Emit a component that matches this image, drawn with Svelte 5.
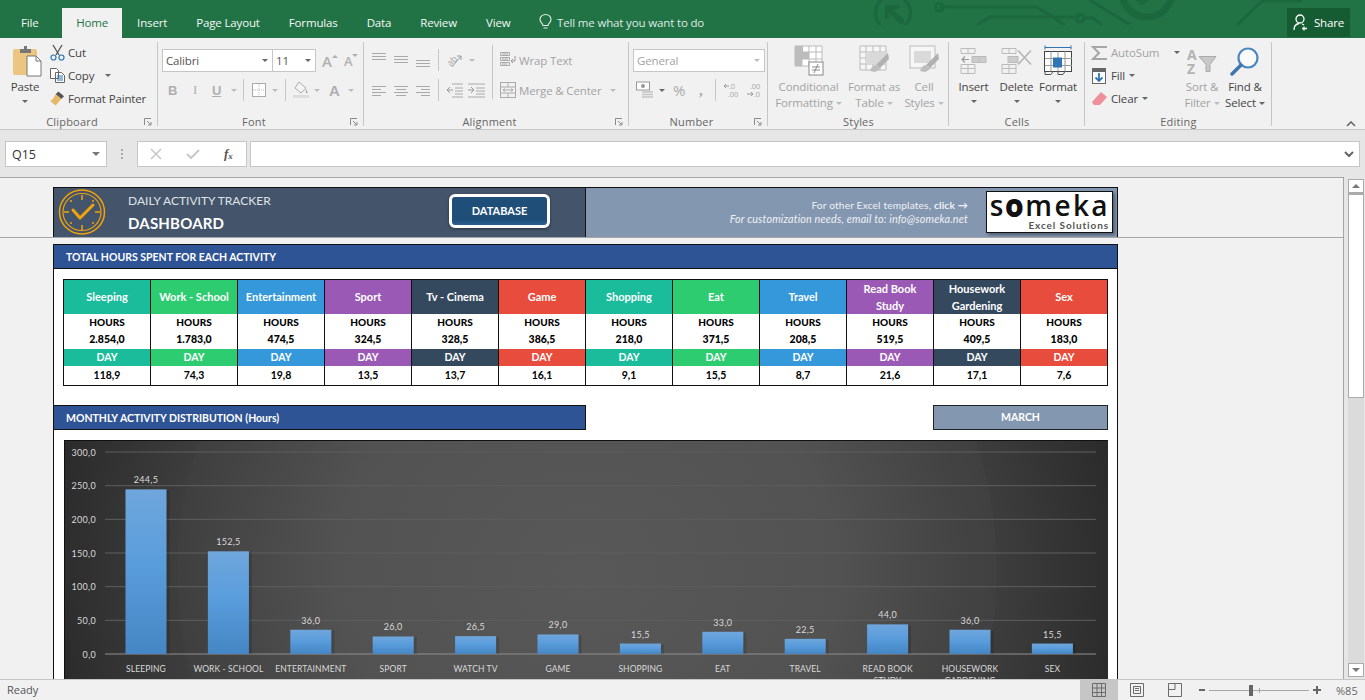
<script>
  const tabs = ["Insert", "Page Layout", "Formulas", "Data", "Review", "View"];

  const activities = [
    { name: "Sleeping", hours: "2.854,0", day: "118,9", color: "#1abc9c" },
    { name: "Work - School", hours: "1.783,0", day: "74,3", color: "#2ecc71" },
    { name: "Entertainment", hours: "474,5", day: "19,8", color: "#3498db" },
    { name: "Sport", hours: "324,5", day: "13,5", color: "#9b59b6" },
    { name: "Tv - Cinema", hours: "328,5", day: "13,7", color: "#34495e" },
    { name: "Game", hours: "386,5", day: "16,1", color: "#e74c3c" },
    { name: "Shopping", hours: "218,0", day: "9,1", color: "#1abc9c" },
    { name: "Eat", hours: "371,5", day: "15,5", color: "#2ecc71" },
    { name: "Travel", hours: "208,5", day: "8,7", color: "#3498db" },
    { name: "Read Book Study", hours: "519,5", day: "21,6", color: "#9b59b6" },
    { name: "Housework Gardening", hours: "409,5", day: "17,1", color: "#34495e" },
    { name: "Sex", hours: "183,0", day: "7,6", color: "#e74c3c" }
  ];

  const monthly = [
    { label: ["SLEEPING"], value: 244.5 },
    { label: ["WORK - SCHOOL"], value: 152.5 },
    { label: ["ENTERTAINMENT"], value: 36 },
    { label: ["SPORT"], value: 26 },
    { label: ["WATCH TV"], value: 26.5 },
    { label: ["GAME"], value: 29 },
    { label: ["SHOPPING"], value: 15.5 },
    { label: ["EAT"], value: 33 },
    { label: ["TRAVEL"], value: 22.5 },
    { label: ["READ BOOK", "STUDY"], value: 44 },
    { label: ["HOUSEWORK", "GARDENING"], value: 36 },
    { label: ["SEX"], value: 15.5 }
  ];

  // chart geometry, relative to the chart box
  const baseY = 213;
  const unit = 202 / 300;
  const plotLeft = 40;
  const plotRight = 1031;
  const step = 82.4;
  const ticks = [0, 50, 100, 150, 200, 250, 300];
  const fmt = (v) => v.toFixed(1).replace(".", ",");
</script>

{#snippet lines(rows)}
  <svg class="ic" width="15" height="20" viewBox="0 0 15 20">
    {#each rows as r}
      <rect x={r[0]} y={r[1]} width={r[2]} height="1" fill="#a9a9a9" />
    {/each}
  </svg>
{/snippet}

{#snippet launcher()}
  <svg class="launch" width="8" height="8" viewBox="0 0 8 8">
    <path d="M.5 7V.5H7" fill="none" stroke="#8a8a8a" />
    <path d="M3 3l3.5 3.5M7 4v3H4" fill="none" stroke="#8a8a8a" />
  </svg>
{/snippet}

<div class="app">
  <header class="tabbar">
    <svg class="art" width="500" height="25" viewBox="860 0 500 25">
      <g fill="none" stroke="#1c683e" stroke-width="3">
        <circle cx="893" cy="13" r="17.5" stroke-width="3.5" />
        <path d="M939 7h98l28 18M977 25l13-8h90M1084 18h9l9 7M1090 0l40 25M1237 25l25-24h40" />
        <circle cx="939.500" cy="7" r="4" />
        <circle cx="1080" cy="18" r="4" />
        <circle cx="1147" cy="-8" r="25" stroke-width="7" />
        <path d="M1136 -2l6 5 10-8" stroke-width="4" />
      </g>
      <path d="M885 5h14v4h-6l12 12-4 4-12-12v6h-4z" fill="#1c683e" />
    </svg>
    <span class="tab file">File</span>
    <span class="tab home">Home</span>
    {#each tabs as t}
      <span class="tab">{t}</span>
    {/each}
    <div class="tell">
      <svg class="ic" width="13" height="16" viewBox="0 0 13 16">
        <path d="M4 11.500C3.500 9 1 8.500 1 5.500a5.500 5 0 0 1 11 0c0 3-2.500 3.500-3 6zM4.500 14h4" fill="none" stroke="#e4efe8" stroke-width="1.100" />
      </svg>
      <span>Tell me what you want to do</span>
    </div>
    <div class="share">
      <svg class="ic" width="16" height="17" viewBox="0 0 16 17">
        <circle cx="7" cy="5" r="4" fill="none" stroke="#fff" stroke-width="1.300" />
        <path d="M1 16c0-4 2-6 5-6.500M9 10c1 .3 1.500.6 2 1M11 12.500v4M9 14.500h5" fill="none" stroke="#fff" stroke-width="1.300" />
      </svg>
      <span>Share</span>
    </div>
  </header>

  <section class="ribbon">
    <!-- Clipboard -->
    <div class="group" style="width:158px">
      <div class="body">
        <div class="big paste">
          <svg class="bigic" width="30" height="32" viewBox="0 0 30 32">
            <rect x="1" y="4" width="24" height="26" rx="2" fill="#ecc680" />
            <path d="M8 4h4V1h3v3h4v4H8z" fill="#777" />
            <path d="M15 11h9l5 5v15H15z" fill="#fff" stroke="#777" />
            <path d="M24 11v5h5" fill="none" stroke="#777" />
          </svg>
          <span class="dark">Paste</span>
          <i class="caret"></i>
        </div>
        <div class="stack">
          <div class="row">
            <svg class="ic" width="15" height="16" viewBox="0 0 15 16">
              <path d="M3 0l6 10M12 0L6 10" stroke="#555" stroke-width="1.300" />
              <circle cx="3.500" cy="12.500" r="2.500" fill="none" stroke="#2f75b5" stroke-width="1.200" />
              <circle cx="11.500" cy="12.500" r="2.500" fill="none" stroke="#2f75b5" stroke-width="1.200" />
            </svg>
            <span>Cut</span>
          </div>
          <div class="row">
            <svg class="ic" width="15" height="15" viewBox="0 0 15 15">
              <path d="M.5.5h6l2 2v8H.5zM5.500 4.500h6l3 3v7h-9z" fill="#fff" stroke="#666" />
              <path d="M7 8h6M7 10h6M7 12h6" stroke="#2f75b5" />
            </svg>
            <span>Copy</span>
            <i class="caret copycaret"></i>
          </div>
          <div class="row">
            <svg class="ic" width="16" height="15" viewBox="0 0 16 15">
              <path d="M9 0l6 5-3 3-6-5z" fill="#555" />
              <path d="M6 3l6 5-6 7-6-5c2 0 4-3 6-7z" fill="#e8b766" />
            </svg>
            <span>Format Painter</span>
          </div>
        </div>
      </div>
      <div class="label launched">Clipboard{@render launcher()}</div>
    </div>

    <!-- Font -->
    <div class="group" style="width:206px">
      <div class="body col fontcol">
        <div class="combos">
          <div class="combo" style="width:111px"><span>Calibri</span><i class="caret"></i></div>
          <div class="combo" style="width:44px"><span>11</span><i class="caret"></i></div>
          <span class="grow">A<i class="tri up"></i></span>
          <span class="shrink">A<i class="tri"></i></span>
        </div>
        <div class="tools fonttools">
          <b class="g" style="width:15px">B</b>
          <em class="g" style="width:29px">I</em>
          <u class="g" style="width:14px">U</u>
          <i class="caret soft" style="margin-left:5px"></i>
          <span class="vsep" style="margin:0 8px 0 6px"></span>
          <svg class="ic" width="14" height="14" viewBox="0 0 14 14">
            <rect x=".5" y=".5" width="13" height="13" fill="#fff" stroke="#aaa" />
            <path d="M7 1v12M1 7h12" stroke="#bbb" stroke-dasharray="1 1" />
          </svg>
          <i class="caret soft" style="margin-left:6px"></i>
          <span class="vsep" style="margin:0 7px"></span>
          <svg class="ic" width="16" height="18" viewBox="0 0 16 18">
            <path d="M6 1l7 6-5 5-6-5z" fill="#f4f4f4" stroke="#aaa" />
            <path d="M13 8c1 2 2 3 1.500 4s-2.500 0-1.500-4z" fill="#aaa" />
            <rect x="0" y="14" width="16" height="3" fill="#ddd" />
          </svg>
          <i class="caret soft" style="margin-left:5px"></i>
          <b class="g biga">A</b>
          <i class="caret soft" style="margin-left:8px"></i>
        </div>
      </div>
      <div class="label launched">Font{@render launcher()}</div>
    </div>

    <!-- Alignment -->
    <div class="group" style="width:265px">
      <div class="body alignbody">
        <div class="col aligncol">
          <div class="tools">
            <span class="aligns">
              {@render lines([[0,3,14],[0,6,14],[0,9,14]])}
              {@render lines([[0,6,14],[0,9,14],[0,12,14]])}
              {@render lines([[0,10,14],[0,13,14],[0,16,14]])}
            </span>
            <span class="vsep" style="margin:0 7px"></span>
            <svg class="ic" width="17" height="18" viewBox="0 0 17 18">
              <text x="1" y="13" transform="rotate(-45 6 10)" font-size="9" font-family="Open Sans, sans-serif" fill="#aaa">ab</text>
              <path d="M6 16L15 5M11 5h4v4" fill="none" stroke="#999" />
            </svg>
            <i class="caret soft" style="margin-left:6px"></i>
          </div>
          <div class="tools">
            <span class="aligns">
              {@render lines([[0,6,14],[0,9,9],[0,12,14],[0,15,9]])}
              {@render lines([[0,6,14],[2,9,10],[0,12,14],[2,15,10]])}
              {@render lines([[0,6,14],[5,9,9],[0,12,14],[5,15,9]])}
            </span>
            <span class="vsep" style="margin:0 7px"></span>
            <svg class="ic" width="17" height="18" viewBox="0 0 17 18">
              <path d="M6 3h11M9 7h8M9 10h8M9 13h8M6 16h11" stroke="#aaa" />
              <path d="M7 9H1M4 6L1 9l3 3" fill="none" stroke="#999" />
            </svg>
            <svg class="ic" style="margin-left:5px" width="17" height="18" viewBox="0 0 17 18">
              <path d="M0 3h17M0 16h17M8 7h9M8 10h9M8 13h9" stroke="#aaa" />
              <path d="M0 9h6M3 6l3 3-3 3" fill="none" stroke="#999" />
            </svg>
          </div>
        </div>
        <span class="vsep tall"></span>
        <div class="col">
          <div class="tools muted">
            <svg class="ic" width="16" height="16" viewBox="0 0 16 16">
              <path d="M.5.500h9v3h-9zM.5 5.500h9v3h-9zM.5 10.500h9v3h-9zM2 2h6M2 7h6M2 12h5" fill="none" stroke="#aaa" />
              <path d="M15 4v5h-4M13 7l-2 2 2 2" fill="none" stroke="#999" />
            </svg>
            <span class="lab">Wrap Text</span>
          </div>
          <div class="tools muted">
            <svg class="ic" width="16" height="16" viewBox="0 0 16 16">
              <rect x=".5" y=".5" width="15" height="15" fill="none" stroke="#aaa" />
              <path d="M1 5h14M1 11h14M8 1v4M8 11v4M3 8h10M5 6.500L3 8l2 1.500M11 6.500L13 8l-2 1.500" fill="none" stroke="#aaa" />
            </svg>
            <span class="lab">Merge &amp; Center</span>
            <i class="caret soft" style="margin-left:9px"></i>
          </div>
        </div>
      </div>
      <div class="label launched">Alignment{@render launcher()}</div>
    </div>

    <!-- Number -->
    <div class="group" style="width:139px">
      <div class="body col numcol">
        <div class="combo general"><span>General</span><i class="caret soft"></i></div>
        <div class="tools numtools">
          <svg class="ic" width="17" height="18" viewBox="0 0 17 18">
            <rect x=".5" y="1" width="13" height="8" fill="#fff" stroke="#999" />
            <circle cx="7" cy="5" r="2" fill="#999" />
            <path d="M6 11h11M6 13.500h11M6 16h11" stroke="#c4c4c4" stroke-width="1.500" />
          </svg>
          <i class="caret" style="margin-left:6px"></i>
          <span class="pct">%</span>
          <b class="comma">,</b>
          <span class="vsep" style="margin:0 8px 0 12px"></span>
          <svg class="ic" width="15" height="16" viewBox="0 0 15 16">
            <text x="5" y="6.500" font-size="7.500" font-family="Open Sans, sans-serif" fill="#aaa">.0</text>
            <text x="4" y="15" font-size="7.500" font-family="Open Sans, sans-serif" fill="#aaa">.00</text>
            <path d="M5 4H0M2 2L0 4l2 2" fill="none" stroke="#999" />
          </svg>
          <svg class="ic" style="margin-left:7px" width="15" height="16" viewBox="0 0 15 16">
            <text x="4" y="6.500" font-size="7.500" font-family="Open Sans, sans-serif" fill="#aaa">.00</text>
            <text x="8" y="15" font-size="7.500" font-family="Open Sans, sans-serif" fill="#aaa">.0</text>
            <path d="M1 12h6M5 10l2 2-2 2" fill="none" stroke="#999" />
          </svg>
        </div>
      </div>
      <div class="label launched">Number{@render launcher()}</div>
    </div>

    <!-- Styles -->
    <div class="group" style="width:181px">
      <div class="body" style="padding-left:2px">
        <div class="big muted" style="width:77px">
          <svg class="bigic" width="30" height="32" viewBox="0 0 30 32">
            <path d="M1 1h27v20H1zM1 7h27M1 14h27M8 1v20M15 1v20M22 1v20" fill="#fff" stroke="#bbb" />
            <path d="M1 1h8v6h6v7h-7v7H1z" fill="#bcbcbc" />
            <rect x="15" y="17" width="14" height="13" fill="#fff" stroke="#888" />
            <path d="M18 22h8M18 25h8M24 19l-4 9" stroke="#888" />
          </svg>
          <span class="lh">Conditional</span>
          <span class="lh">Formatting<i class="caret soft inl"></i></span>
        </div>
        <div class="big muted" style="width:54px">
          <svg class="bigic" width="30" height="32" viewBox="0 0 30 32">
            <path d="M1 1h26v24H1zM1 7h26M1 13h26M1 19h26M7 1v24M14 1v24M21 1v24" fill="#f6f6f6" stroke="#bbb" />
            <path d="M7 7h20v12H7z" fill="#d9d9d9" />
            <path d="M29 8L17 20l4 3L30 14z" fill="#b0b0b0" />
            <path d="M17 20c-3 0-5 3-6 6l5 1c3-1 5-3 5-4z" fill="#bdbdbd" />
          </svg>
          <span class="lh">Format as</span>
          <span class="lh">Table<i class="caret soft inl"></i></span>
        </div>
        <div class="big muted" style="width:46px">
          <svg class="bigic" width="30" height="32" viewBox="0 0 30 32">
            <rect x="1" y="1" width="25" height="22" fill="#f6f6f6" stroke="#bbb" />
            <rect x="5" y="6" width="17" height="12" fill="#d9d9d9" />
            <path d="M29 8L17 20l4 3L30 14z" fill="#b0b0b0" />
            <path d="M17 20c-3 0-5 3-6 6l5 1c3-1 5-3 5-4z" fill="#bdbdbd" />
          </svg>
          <span class="lh">Cell</span>
          <span class="lh">Styles<i class="caret soft inl"></i></span>
        </div>
      </div>
      <div class="label">Styles</div>
    </div>

    <!-- Cells -->
    <div class="group" style="width:136px">
      <div class="body">
        <div class="big" style="width:49px">
          <svg class="bigic" width="27" height="27" viewBox="0 0 27 27">
            <path d="M1 1h14v5H1zM8 1v5M1 17h14v9H1zM1 21h14M8 17v9" fill="none" stroke="#bbb" />
            <path d="M12 9h14v6H12zM19 9v6" fill="#ccc" stroke="#bbb" />
            <path d="M9 12H2M5 9l-3 3 3 3" fill="none" stroke="#999" stroke-width="1.200" />
          </svg>
          <span class="lh dark">Insert</span>
          <i class="caret"></i>
        </div>
        <div class="big" style="width:37px">
          <svg class="bigic" width="31" height="27" viewBox="0 0 31 27">
            <path d="M1 1h14v5H1zM8 1v5M1 17h14v9H1zM1 21h14M8 17v9" fill="none" stroke="#bbb" />
            <rect x="7" y="9" width="10" height="6" fill="#ccc" stroke="#bbb" />
            <path d="M17 3l13 14M30 3L17 17" stroke="#b3b3b3" stroke-width="1.500" />
          </svg>
          <span class="lh dark">Delete</span>
          <i class="caret"></i>
        </div>
        <div class="big" style="width:46px">
          <svg class="bigic" width="29" height="31" viewBox="0 0 29 31">
            <path d="M1 2h26M1 0v4M27 0v4" stroke="#2f75b5" fill="none" />
            <rect x=".5" y="6" width="27" height="20" fill="#fff" stroke="#444" />
            <path d="M1 13h27M1 20h27M7 6v20M14 6v20M21 6v20" stroke="#999" />
            <rect x="9" y="12" width="9" height="10" fill="#2f75b5" />
            <path d="M1 26v3h6l2-3M14 26v3h5l2-3" fill="none" stroke="#555" />
          </svg>
          <span class="lh dark">Format</span>
          <i class="caret"></i>
        </div>
      </div>
      <div class="label">Cells</div>
    </div>

    <!-- Editing -->
    <div class="group" style="width:187px">
      <div class="body">
        <div class="stack edit">
          <div class="row muted">
            <svg class="ic" width="15" height="14" viewBox="0 0 15 14">
              <path d="M15 1H1l6 6-6 6h14" fill="none" stroke="#a6a6a6" stroke-width="2" />
            </svg>
            <span>AutoSum</span>
            <i class="caret" style="margin-left:11px"></i>
          </div>
          <div class="row">
            <svg class="ic" width="15" height="16" viewBox="0 0 15 16">
              <rect x=".5" y=".5" width="13" height="15" fill="#fff" stroke="#666" />
              <rect x="0" y="0" width="14" height="4" fill="#666" />
              <path d="M7 5v8M3.500 9.500L7 13l3.500-3.500" fill="none" stroke="#2f75b5" stroke-width="1.800" />
            </svg>
            <span>Fill</span>
            <i class="caret inl2"></i>
          </div>
          <div class="row">
            <svg class="ic" width="15" height="14" viewBox="0 0 15 14">
              <path d="M9 0l6 5-7 8-6 0-2-3z" fill="#ee8f9a" />
            </svg>
            <span>Clear</span>
            <i class="caret inl2"></i>
          </div>
        </div>
        <div class="big muted" style="width:40px">
          <svg class="bigic" width="30" height="27" viewBox="0 0 30 27">
            <text x="0" y="12" font-size="14" font-weight="700" font-family="Open Sans, sans-serif" fill="#b3b3b3">A</text>
            <text x="0" y="26" font-size="14" font-weight="700" font-family="Open Sans, sans-serif" fill="#b3b3b3">Z</text>
            <path d="M12 9h17l-6 8v7l-4 0v-7z" fill="#c8c8c8" stroke="#aaa" />
          </svg>
          <span class="lh">Sort &amp;</span>
          <span class="lh">Filter<i class="caret soft inl"></i></span>
        </div>
        <div class="big" style="width:46px">
          <svg class="bigic" width="30" height="28" viewBox="0 0 30 28">
            <circle cx="18" cy="11" r="9.500" fill="#fafafa" stroke="#4a86c0" stroke-width="2.200" />
            <path d="M11 18L2 27" stroke="#3f77ad" stroke-width="3.500" stroke-linecap="round" />
          </svg>
          <span class="lh dark">Find &amp;</span>
          <span class="lh dark">Select<i class="caret inl"></i></span>
        </div>
      </div>
      <div class="label">Editing</div>
    </div>

    <svg class="collapse" width="10" height="6" viewBox="0 0 10 6">
      <path d="M1 5l4-4 4 4" fill="none" stroke="#666" stroke-width="1.600" />
    </svg>
  </section>

  <section class="formula">
    <div class="namebox"><span>Q15</span><i class="caret big-caret"></i></div>
    <div class="dots"><i></i><i></i><i></i></div>
    <div class="fxbox">
      <svg class="ic" width="12" height="12" viewBox="0 0 12 12">
        <path d="M1 1l10 10M11 1L1 11" stroke="#c9c9c9" stroke-width="1.600" />
      </svg>
      <svg class="ic" width="14" height="12" viewBox="0 0 14 12">
        <path d="M1 6l4 4 8-8" fill="none" stroke="#c9c9c9" stroke-width="2" />
      </svg>
      <span class="fx">f<sub>x</sub></span>
    </div>
    <div class="input">
      <svg class="ic" width="10" height="7" viewBox="0 0 10 7">
        <path d="M1 1l4 4 4-4" fill="none" stroke="#666" stroke-width="2" />
      </svg>
    </div>
  </section>

  <main class="workspace">
    <div class="sheet">
      <div class="frozen">
        <div class="head">
          <div class="head-left">
            <svg class="clock" width="48" height="46" viewBox="0 0 48 46">
              <g fill="none" stroke="#f0a30a">
                <ellipse cx="24" cy="23" rx="22.500" ry="22" stroke-width="1.500" />
                <ellipse cx="24" cy="23" rx="19" ry="18.500" stroke-width="1.200" />
                <path d="M24 6v5M24 36v5M6 23h5M37 23h5" stroke-width="1.500" />
                <path d="M15 21l7 8 13-13" stroke-width="3" stroke-linecap="round" stroke-linejoin="round" />
              </g>
              <circle cx="13" cy="12" r="1" fill="#f0a30a" /><circle cx="35" cy="12" r="1" fill="#f0a30a" />
              <circle cx="13" cy="34" r="1" fill="#f0a30a" /><circle cx="35" cy="34" r="1" fill="#f0a30a" />
            </svg>
            <div class="titles">
              <span class="t1">DAILY ACTIVITY TRACKER</span>
              <span class="t2">DASHBOARD</span>
            </div>
            <div class="db">DATABASE</div>
          </div>
          <div class="head-right">
            <div class="notes">
              <span>For other Excel templates, <b>click →</b></span>
              <em>For customization needs, email to: info@someka.net</em>
            </div>
            <div class="logo">
              <span class="brand">s<span class="o">o</span>meka</span>
              <span class="sub">Excel Solutions</span>
            </div>
          </div>
        </div>
      </div>

      <div class="panel">
        <div class="bar wide">TOTAL HOURS SPENT FOR EACH ACTIVITY</div>
        <div class="table">
          {#each activities as a}
            <div class="col-a">
              <div class="name" style="background:{a.color}"><span>{a.name}</span></div>
              <div class="hours"><b>HOURS</b><b>{a.hours}</b></div>
              <div class="dayhead" style="background:{a.color}">DAY</div>
              <div class="dayval">{a.day}</div>
            </div>
          {/each}
        </div>

        <div class="monthrow">
          <div class="bar half">MONTHLY ACTIVITY DISTRIBUTION (Hours)</div>
          <div class="month">MARCH</div>
        </div>

        <div class="chart">
          <svg width="1043" height="262" viewBox="0 0 1043 262">
            <defs>
              <linearGradient id="barfill" x1="0" y1="0" x2="0" y2="1">
                <stop offset="0" stop-color="#6fa6dc" />
                <stop offset=".45" stop-color="#5a9ddc" />
                <stop offset="1" stop-color="#4586c4" />
              </linearGradient>
            </defs>
            <g fill="#fff" opacity=".012">
              <circle cx="522" cy="130" r="410" />
              <circle cx="522" cy="130" r="300" />
              <circle cx="522" cy="130" r="225" />
              <circle cx="522" cy="130" r="165" />
            </g>
            {#each ticks as t}
              <line x1={plotLeft} x2={plotRight} y1={baseY - t * unit} y2={baseY - t * unit}
                stroke={t === 0 ? "#8f8f8f" : "#5e5e5e"} />
              <text class="axis" x="31" y={baseY - t * unit + 3.500}>{fmt(t)}</text>
            {/each}
            {#each monthly as m, i}
              {@const x = plotLeft + step * i + 20.500}
              {@const h = m.value * unit}
              <rect x={x + 41} y={baseY - h + 1} width="3" height={h - 1} fill="#000" opacity=".14" />
              <rect x={x} y={baseY - h} width="41" height={h} fill="url(#barfill)" />
              <text class="val" x={x + 20.500} y={baseY - h - 6}>{fmt(m.value)}</text>
              {#each m.label as l, j}
                <text class="cat" x={x + 20.500} y={231 + j * 12}>{l}</text>
              {/each}
            {/each}
          </svg>
        </div>
      </div>
    </div>

    <aside class="scroll">
      <div class="sbtn"><i class="tri up dark-tri"></i></div>
      <div class="thumb"></div>
      <div class="track"></div>
      <div class="sbtn"><i class="tri dark-tri"></i></div>
    </aside>
  </main>

  <footer class="status">
    <span class="ready">Ready</span>
    <div class="views">
      <div class="view on">
        <svg class="ic" width="14" height="14" viewBox="0 0 14 14">
          <path d="M.5.500h13v13H.5zM.5 5h13M.5 9.500h13M5 .5v13M9.500.5v13" fill="none" stroke="#6b6b6b" />
        </svg>
      </div>
      <div class="view">
        <svg class="ic" width="14" height="14" viewBox="0 0 14 14">
          <path d="M.5.500h13v13H.5zM3.500 3.500h7v7h-7zM5 5.500h4M5 7.500h4" fill="none" stroke="#6b6b6b" />
        </svg>
      </div>
      <div class="view">
        <svg class="ic" width="14" height="14" viewBox="0 0 14 14">
          <path d="M.5.500h13v13H.5zM.5 6.500h6.500V.5M7 .5" fill="none" stroke="#6b6b6b" />
        </svg>
      </div>
    </div>
    <div class="zoom">
      <i class="minus"></i>
      <div class="slider"><i class="mark"></i><i class="knob"></i></div>
      <i class="plus"></i>
      <span class="pctz">%85</span>
    </div>
  </footer>
</div>

<style>
  :global(body) {
    margin: 0;
    overflow: hidden;
    background: #f1f1f1;
  }

  .app {
    width: 1365px;
    height: 700px;
    display: flex;
    flex-direction: column;
    overflow: hidden;
    font-family: "Open Sans", "Noto Sans", sans-serif;
    font-size: 11.500px;
    color: #444;
  }

  i, em, b { font-style: normal; }
  .ic { display: block; flex: none; overflow: visible; }

  /* title tabs */
  .tabbar {
    height: 38px;
    flex: none;
    background: #217346;
    display: flex;
    align-items: flex-end;
    padding-left: 6.500px;
    box-sizing: border-box;
    position: relative;
    color: #f4f8f5;
    letter-spacing: -.15px;
  }
  .art { position: absolute; left: 860px; top: 0; }
  .tab {
    position: relative;
    height: 30px;
    line-height: 29px;
    padding: 0 14.500px;
  }
  .tab.file { margin-right: 9px; }
  .tab.home {
    background: #f1f1f1;
    color: #217346;
    width: 60px;
    padding: 0;
    text-align: center;
    margin-right: 0.500px;
  }
  .tell {
    position: relative;
    display: flex;
    align-items: center;
    gap: 5px;
    height: 30px;
    padding-bottom: 1px;
    margin-left: 14px;
    color: #dfeae3;
  }
  .share {
    position: absolute;
    left: 1287px;
    top: 8px;
    width: 63px;
    height: 29px;
    background: #165c33;
    display: flex;
    align-items: center;
    justify-content: center;
    gap: 5px;
    color: #fff;
  }

  /* ribbon */
  .ribbon {
    height: 92px;
    flex: none;
    display: flex;
    position: relative;
    box-sizing: border-box;
    background: #f1f1f1;
    border-bottom: 1px solid #c6c6c6;
    letter-spacing: -.15px;
  }
  .group {
    position: relative;
    flex: none;
    height: 91px;
    padding-top: 4px;
    box-sizing: border-box;
    display: flex;
    flex-direction: column;
  }
  .group::after {
    content: "";
    position: absolute;
    right: 0;
    top: 4px;
    bottom: 3px;
    width: 1px;
    background: #c6c6c6;
  }
  .body { display: flex; flex: 1; min-height: 0; }
  .col { display: flex; flex-direction: column; }
  .label {
    height: 15px;
    line-height: 15px;
    flex: none;
    text-align: center;
    color: #666;
    font-size: 11px;
    letter-spacing: 0.200px;
    position: relative;
  }
  .label.launched { padding-right: 14px; }
  .launch { position: absolute; right: 6px; top: 4px; }

  .big {
    display: flex;
    flex-direction: column;
    align-items: center;
    flex: none;
    color: #444;
  }
  .bigic { height: 32px; margin-top: 3px; margin-bottom: 2px; display: block; }
  .lh { line-height: 16px; white-space: nowrap; }
  .big .caret { margin-top: 5px; }
  .paste { width: 50px; }
  .paste > span { line-height: 16px; }
  .paste .bigic { margin-left: 4px; }
  .dark { color: #444; }
  .muted, .muted .lh { color: #a3a3a3; }

  .stack { display: flex; flex-direction: column; margin-top: -1px; }
  .row { display: flex; align-items: center; height: 23px; gap: 3px; white-space: nowrap; color: #444; }
  .row .ic { width: 15px; }
  .row.muted { color: #a3a3a3; }
  .edit { width: 90px; padding-left: 7px; flex: none; }
  .edit .row { gap: 4px; }
  .copycaret { margin-left: 8px; }
  .inl2 { margin-left: 0; }

  .caret {
    display: inline-block;
    width: 0;
    height: 0;
    border: 3.500px solid transparent;
    border-top: 3.500px solid #666;
    border-bottom: 0;
    flex: none;
  }
  .caret.soft { border-top-color: #bdbdbd; }
  .caret.inl { margin-left: 3px; vertical-align: 2px; margin-top: 0; }

  .fontcol { padding: 7px 0 0 4px; }
  .combos { display: flex; align-items: center; height: 23px; }
  .combo {
    height: 23px;
    box-sizing: border-box;
    background: #fff;
    border: 1px solid #c6c6c6;
    display: flex;
    align-items: center;
    justify-content: space-between;
    padding: 0 4px 0 3px;
    margin-right: -1px;
    color: #555;
  }
  .grow, .shrink { position: relative; color: #b0b0b0; font-weight: 600; display: block; }
  .grow { font-size: 15px; margin-left: 7px; width: 22px; }
  .shrink { font-size: 13px; margin-left: 0; width: 20px; }
  .tri {
    display: inline-block;
    width: 0;
    height: 0;
    border: 3px solid transparent;
    border-top: 3px solid #b0b0b0;
    border-bottom: 0;
    vertical-align: 9px;
    margin-left: 0;
  }
  .tri.up { border-top: 0; border-bottom: 3px solid #b0b0b0; }

  .tools { display: flex; align-items: center; height: 20px; white-space: nowrap; }
  .fonttools { margin-top: 8px; padding-left: 6px; }
  .g { color: #b0b0b0; font-family: "Liberation Sans", sans-serif; font-size: 13px; display: block; flex: none; }
  em.g { padding-left: 10px; font-family: "Liberation Serif", serif; box-sizing: border-box; }
  u.g { font-weight: 700; }
  .biga { font-size: 15px; margin-left: 9px; }
  .vsep { display: block; width: 1px; height: 22px; background: #c6c6c6; flex: none; }
  .vsep.tall { height: 54px; margin: 3px 7px 0 8px; }

  .alignbody { padding-left: 8px; }
  .aligncol { padding-top: 8px; gap: 10px; width: 112px; flex: none; }
  .aligns { display: flex; gap: 7px; }
  .alignbody > .col:last-child { padding-top: 8px; gap: 10px; }
  .lab { margin-left: 3px; color: #a3a3a3; }

  .numcol { padding: 7px 0 0 4px; }
  .general { width: 132px; color: #a3a3a3; margin-bottom: 8px; }
  .numtools { padding-left: 3px; }
  .pct { font-size: 15px; color: #aaa; margin-left: 8px; width: 15px; }
  .comma { color: #aaa; font-size: 15px; margin-left: 11px; line-height: 12px; font-family: "Liberation Serif", serif; }

  .collapse { position: absolute; left: 1346px; top: 83px; }

  /* formula row */
  .formula {
    height: 47px;
    flex: none;
    background: #e6e6e6;
    display: flex;
    align-items: flex-start;
    padding: 11px 5px 0;
    box-sizing: border-box;
  }
  .namebox, .fxbox, .input {
    height: 26px;
    box-sizing: border-box;
    background: #fff;
    border: 1px solid #c6c6c6;
    display: flex;
    align-items: center;
  }
  .namebox {
    width: 102px;
    padding: 0 6px;
    justify-content: space-between;
    font-size: 12.500px;
    color: #333;
  }
  .big-caret { border-width: 4px; border-top-width: 4px; border-top-color: #777; }
  .dots { width: 30px; display: flex; flex-direction: column; align-items: center; gap: 2px; padding-top: 8px; }
  .dots i { width: 2px; height: 2px; background: #aaa; }
  .fxbox { width: 110px; padding-left: 12px; gap: 24px; }
  .fx { font-family: "Liberation Serif", serif; font-style: italic; font-weight: 700; font-size: 13px; color: #555; }
  .fx sub { font-size: 9px; vertical-align: -1px; }
  .input { margin-left: 3px; width: 1110px; justify-content: flex-end; padding-right: 5px; }

  /* sheet */
  .workspace { display: flex; height: 502px; flex: none; background: #e6e6e6; overflow: hidden; }
  .sheet {
    width: 1344px;
    height: 502px;
    box-sizing: border-box;
    flex: none;
    background: #f1f1f1;
    border-top: 1px solid #a6a6a6;
    border-right: 1px solid #a6a6a6;
    overflow: hidden;
  }
  .frozen {
    height: 60px;
    box-sizing: border-box;
    padding: 9px 0 0 53px;
    border-bottom: 1px solid #a6a6a6;
    overflow: hidden;
  }
  .head {
    width: 1065px;
    height: 60px;
    box-sizing: border-box;
    display: flex;
    border: 1px solid #111;
    background: #8497b0;
    color: #fff;
    font-family: Lato, sans-serif;
  }
  .head-left {
    width: 532px;
    flex: none;
    box-sizing: border-box;
    background: #44546a;
    border-right: 1px solid #111;
    display: flex;
    align-items: flex-start;
    padding: 1px 0 0 4px;
  }
  .clock { flex: none; }
  .titles { display: flex; flex-direction: column; margin-left: 22px; padding-top: 4px; width: 321px; }
  .t1 { font-size: 12px; line-height: 16px; color: #dfe3e8; }
  .t2 { font-size: 15px; line-height: 20px; font-weight: 700; margin-top: 4px; letter-spacing: .2px; }
  .db {
    width: 101px;
    height: 34px;
    box-sizing: border-box;
    margin: 5px 0 0 0;
    border: 3px solid #fff;
    border-radius: 6px;
    background: linear-gradient(#1f4e79, #1f4e79 80%, #2b5f91);
    box-shadow: 0 1px 3px rgba(0,0,0,.4);
    text-align: center;
    line-height: 27px;
    font-weight: 700;
    font-size: 11px;
    flex: none;
  }
  .head-right { flex: 1; display: flex; align-items: flex-start; justify-content: flex-end; padding: 3px 4px 0 0; }
  .notes {
    display: flex;
    flex-direction: column;
    align-items: flex-end;
    font-size: 10.200px;
    line-height: 14px;
    padding: 7px 18px 0 0;
    color: #eef1f5;
    letter-spacing: .15px;
  }
  .notes em { font-style: italic; font-size: 10.800px; }
  .logo {
    width: 127px;
    height: 42px;
    box-sizing: border-box;
    background: #fff;
    border: 1px solid #111;
    box-shadow: 2px 2px 3px rgba(30,40,60,.5);
    color: #111;
    display: flex;
    flex-direction: column;
    align-items: flex-end;
    padding-right: 3px;
  }
  .brand { font-family: "Open Sans", sans-serif; font-size: 28px; line-height: 27px; letter-spacing: 2.400px; font-weight: 600; margin-right: -1px; }
  .brand .o { -webkit-text-stroke: 2px #111; }
  .sub { font-size: 10px; line-height: 12px; font-weight: 700; color: #555; letter-spacing: .9px; }

  .panel {
    width: 1065px;
    margin: 6px 0 0 53px;
    height: 440px;
    box-sizing: border-box;
    background: #fff;
    border-left: 1px solid #111;
    border-right: 1px solid #111;
    font-family: Lato, sans-serif;
  }
  .bar {
    height: 25px;
    box-sizing: border-box;
    background: #2f5496;
    border: 1px solid #111;
    color: #fff;
    font-weight: 700;
    font-size: 10.500px;
    line-height: 24px;
    padding-left: 12px;
  }
  .bar.wide { margin: 0 -1px; }
  .bar.half { width: 533px; margin-left: -1px; }

  .table {
    display: flex;
    width: 1045px;
    box-sizing: border-box;
    margin: 10px 0 0 9px;
    border: 1px solid #111;
    border-right: 0;
  }
  .col-a {
    width: 87px;
    box-sizing: border-box;
    border-right: 1px solid #111;
    text-align: center;
    font-weight: 700;
    color: #000;
    font-size: 10.500px;
  }
  .name {
    height: 34px;
    box-sizing: border-box;
    display: flex;
    align-items: center;
    justify-content: center;
    color: #fff;
    font-size: 11px;
    line-height: 17px;
    padding: 0 8px 1px;
  }
  .col-a:nth-child(2) .name, .col-a:nth-child(3) .name { padding: 0 0 1px; }
  .col-a:nth-child(10) .name, .col-a:nth-child(11) .name { padding-bottom: 0; }
  .hours {
    height: 35px;
    display: flex;
    flex-direction: column;
    justify-content: space-between;
    padding: 1px 0 2px;
    box-sizing: border-box;
    line-height: 15px;
  }
  .hours b:first-child { font-size: 10px; }
  .dayhead { height: 17px; line-height: 17px; color: #fff; font-size: 10.500px; }
  .dayval { height: 19px; line-height: 19px; }

  .monthrow { display: flex; justify-content: space-between; margin-top: 19px; padding-right: 9px; align-items: flex-start; }
  .month {
    width: 175px;
    height: 25px;
    box-sizing: border-box;
    background: #8497b0;
    border: 1px solid #222;
    color: #fff;
    font-weight: 700;
    font-size: 10.500px;
    line-height: 22px;
    text-align: center;
  }

  .chart {
    margin: 10px 0 0 10px;
    width: 1044px;
    height: 262px;
    box-sizing: border-box;
    border-top: 1px solid #111;
    border-left: 1px solid #111;
    background: radial-gradient(ellipse 560px 500px at 50% 50%, #565656 0%, #505050 45%, #3c3c3c 75%, #282828 100%);
  }
  .chart svg { display: block; }
  .chart text { font-family: Lato, sans-serif; font-size: 9px; letter-spacing: .3px; fill: #d9d9d9; }
  .chart .axis { text-anchor: end; }
  .chart .val { text-anchor: middle; }
  .chart .cat { text-anchor: middle; font-size: 8.500px; letter-spacing: .1px; }

  /* scrollbar */
  .scroll {
    width: 16px;
    margin-left: 4px;
    padding-top: 2px;
    display: flex;
    flex-direction: column;
  }
  .sbtn {
    height: 14px;
    flex: none;
    box-sizing: border-box;
    background: #fff;
    border: 1px solid #ababab;
    display: flex;
    align-items: center;
    justify-content: center;
  }
  .sbtn .tri { vertical-align: 0; border-width: 4px; }
  .tri.dark-tri { border-top-color: #777; }
  .tri.up.dark-tri { border-bottom-color: #777; border-top: 0; }
  .thumb {
    height: 205px;
    flex: none;
    box-sizing: border-box;
    background: #fff;
    border: 1px solid #ababab;
    border-top-width: 2px;
  }
  .track { flex: 1; background: #dbdbdb; }
  .scroll > .sbtn:last-child { margin-bottom: 2px; }

  /* status bar */
  .status {
    height: 21px;
    flex: none;
    background: #f1f1f1;
    border-top: 1px solid #c6c6c6;
    box-sizing: border-box;
    display: flex;
    align-items: center;
    position: relative;
  }
  .ready { margin-left: 7px; font-size: 11px; color: #555; width: 1073px; padding-bottom: 2px; }
  .views { display: flex; height: 20px; }
  .view { width: 38px; height: 20px; display: flex; align-items: center; justify-content: center; }
  .view.on { background: #c6c6c6; }
  .zoom { display: flex; align-items: center; margin-left: 5px; }
  .minus { width: 6px; height: 2px; background: #666; }
  .plus { width: 8px; height: 2px; background: #666; position: relative; margin-left: 4px; }
  .plus::after { content: ""; position: absolute; left: 3px; top: -3px; width: 2px; height: 8px; background: #666; }
  .slider { width: 100px; height: 1px; background: #a6a6a6; position: relative; margin-left: 4px; }
  .knob { position: absolute; left: 40px; top: -5px; width: 4px; height: 11px; background: #666; }
  .mark { position: absolute; left: 50px; top: -2px; width: 1px; height: 5px; background: #a6a6a6; }
  .pctz { margin-left: 15px; font-size: 11px; color: #666; }
</style>
